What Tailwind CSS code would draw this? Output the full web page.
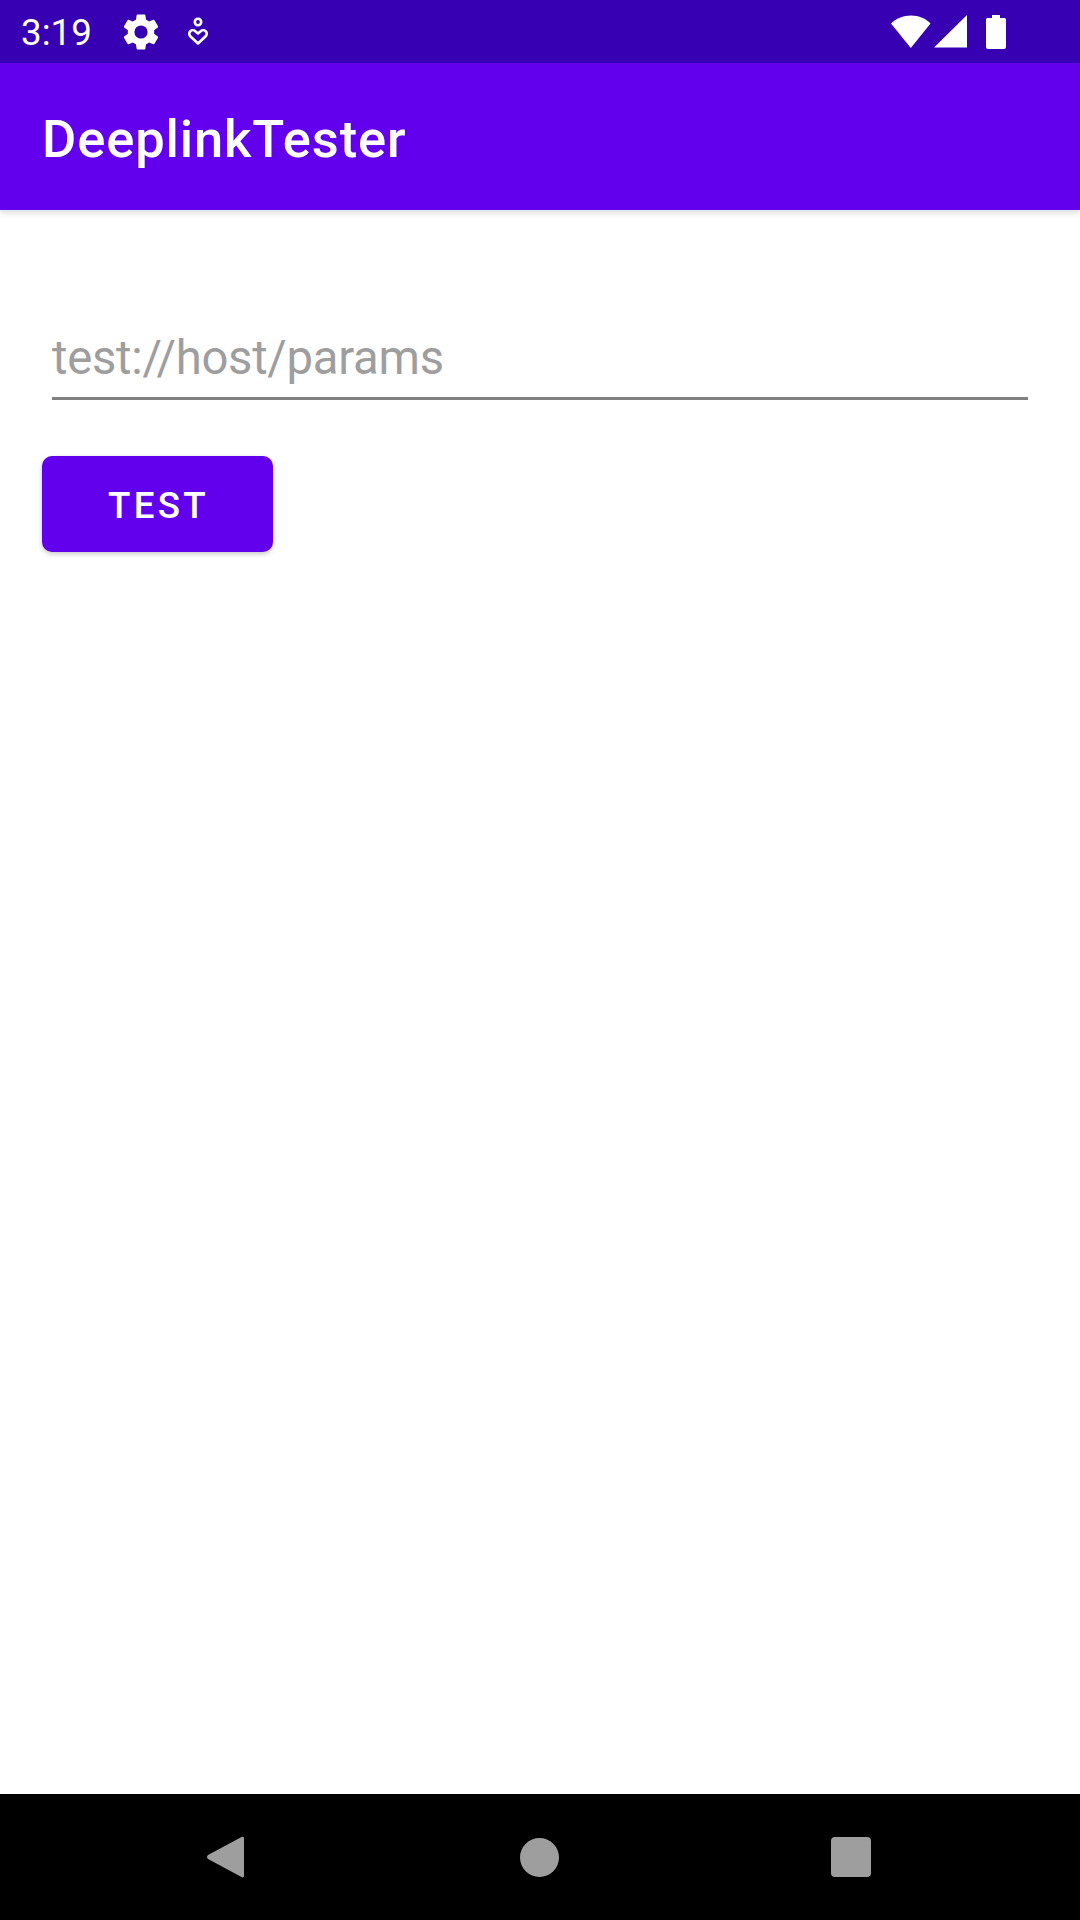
<!doctype html>
<html><head><meta charset="utf-8"><script src="https://cdn.jsdelivr.net/npm/@tailwindcss/browser@4"></script></head>
<body class="m-0 bg-white">
<div class="w-[1080px] h-[1920px] flex flex-col bg-white overflow-hidden font-['Roboto',sans-serif]">
  <div class="h-[63px] bg-[#3700B3] flex items-center text-white shrink-0">
    <span class="ml-[21px] w-[97.5px] text-[36.75px] leading-none font-normal pt-[3px]">3:19</span>
    <svg class="w-[44px] h-[44px]" viewBox="0 0 24 24" fill="#fff"><path d="M19.14 12.94c.04-.3.06-.61.06-.94 0-.32-.02-.64-.07-.94l2.03-1.58a.49.49 0 0 0 .12-.61l-1.92-3.32a.49.49 0 0 0-.59-.22l-2.39.96c-.5-.38-1.03-.7-1.62-.94l-.36-2.54a.48.48 0 0 0-.48-.41h-3.84a.48.48 0 0 0-.47.41l-.36 2.54c-.59.24-1.13.57-1.62.94l-2.39-.96a.48.48 0 0 0-.59.22L2.74 8.87a.47.47 0 0 0 .12.61l2.03 1.58c-.05.3-.09.63-.09.94s.02.64.07.94l-2.03 1.58a.49.49 0 0 0-.12.61l1.92 3.32c.12.22.37.29.59.22l2.39-.96c.5.38 1.03.7 1.62.94l.36 2.54c.05.24.24.41.48.41h3.84c.24 0 .44-.17.47-.41l.36-2.54c.59-.24 1.13-.56 1.62-.94l2.39.96c.22.08.47 0 .59-.22l1.92-3.32a.47.47 0 0 0-.12-.61l-2.01-1.58zM12 15.6A3.6 3.6 0 1 1 12 8.4a3.6 3.6 0 0 1 0 7.2z"/></svg>
    <svg class="ml-[23.500px] w-[24px] h-[32px] mt-[1px]" viewBox="0 0 24 32" fill="none" stroke="#fff" stroke-width="2.6"><circle cx="12" cy="6" r="3.2"/><path stroke-linejoin="round" d="M12 27.500 4.300 20.200a3.500 3.500 0 0 1 0-5 3.600 3.600 0 0 1 5 0L12 17.400l2.700-2.200a3.600 3.600 0 0 1 5 0 3.500 3.500 0 0 1 0 5z"/></svg>
    <div class="ml-auto flex items-center mr-[74px]">
      <svg class="w-[40px] h-[33px]" viewBox="0 0 40 33" fill="#fff"><path d="M0 8.500C5 3.500 12 .5 20 .5s15 3 19.500 8L19.800 33z"/></svg>
      <svg class="ml-[3px] w-[33px] h-[33px]" viewBox="0 0 33 33" fill="#fff"><path d="M33 0v32.500H0z"/></svg>
      <svg class="ml-[19px] w-[20px] h-[34px]" viewBox="0 0 20 34" fill="#fff"><path d="M6 0h8v3h4.500A1.500 1.500 0 0 1 20 4.500V32a2 2 0 0 1-2 2H2a2 2 0 0 1-2-2V4.500A1.500 1.500 0 0 1 1.500 3H6z"/></svg>
    </div>
  </div>
  <header class="h-[147px] bg-[#6200EE] flex items-center pl-[42px] shrink-0 shadow-[0_3px_6px_rgba(0,0,0,0.14)] relative">
    <h1 class="text-[52.5px] leading-none font-medium text-white tracking-[0.87px] pt-[6px]">DeeplinkTester</h1>
  </header>
  <main class="flex-1 flex flex-col items-start pl-[42px] pr-[52px]">
    <div class="mt-[105px] ml-[10px] w-[976px] h-[85px] pt-[10px] border-b-[3px] border-[#808080] text-[47.25px] leading-[66px] tracking-[-0.28px] text-[#9E9E9E]">test://host/params</div>
    <button class="mt-[56px] w-[231px] h-[96px] pt-[4px] pl-[2px] rounded-[10px] bg-[#6200EE] text-white text-[36.75px] font-medium tracking-[3.3px] shadow-[0_2px_5px_rgba(0,0,0,0.22)]">TEST</button>
  </main>
  <nav class="h-[126px] bg-black flex items-center shrink-0 relative">
    <svg class="ml-[207px] w-[38px] h-[42px]" viewBox="0 0 38 42" fill="#9E9E9E"><path d="M1 19 35 .8c1-.5 2 .2 2 1.200v38c0 1.200-1 1.700-2 1.200L1 23c-1.300-1-1.300-3 0-4z"/></svg>
    <div class="ml-[275px] w-[39px] h-[39px] rounded-full bg-[#9E9E9E]"></div>
    <div class="ml-[272px] w-[40px] h-[40px] rounded-[4px] bg-[#9E9E9E]"></div>
  </nav>
</div>
</body></html>
